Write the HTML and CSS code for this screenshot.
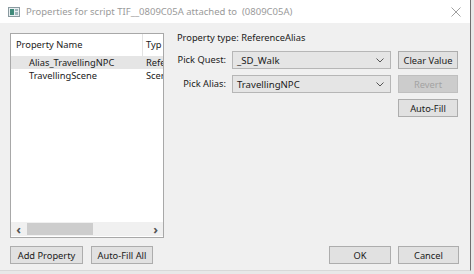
FILE: index.html
```html
<!DOCTYPE html>
<html>
<head>
<meta charset="utf-8">
<link rel="stylesheet" href="styles.css">
</head>
<body>
<div class="screen">
  <div class="window">
    <div class="titlebar">
      <svg class="app-icon" width="12" height="10" viewBox="0 0 12 10">
        <rect x="0.5" y="0.5" width="11" height="9" fill="#e8eef0" stroke="#8a9aa0"/>
        <rect x="2" y="2" width="4" height="6" fill="#3f8a7a"/>
        <rect x="7" y="2" width="3" height="2" fill="#9fb5bc"/>
        <rect x="7" y="5" width="3" height="3" fill="#9fb5bc"/>
      </svg>
      <span class="title">Properties for script TIF__0809C05A attached to&nbsp; (0809C05A)</span>
      <svg class="close" width="10" height="10" viewBox="0 0 10 10">
        <path d="M0.5 0.5 L9.5 9.5 M9.5 0.5 L0.5 9.5" stroke="#a0a0a0" stroke-width="1"/>
      </svg>
    </div>
    <div class="content">
      <div class="main">
        <div class="listbox">
          <div class="list-header">
            <div class="col col-name">Property Name</div>
            <div class="col col-type">Typ</div>
          </div>
          <div class="row selected">
            <div class="col col-name indent">Alias_TravellingNPC</div>
            <div class="col col-type">Refe</div>
          </div>
          <div class="row">
            <div class="col col-name indent">TravellingScene</div>
            <div class="col col-type">Scer</div>
          </div>
          <div class="list-fill"></div>
          <div class="hscroll">
            <span class="arrow">&lsaquo;</span>
            <div class="track"><div class="thumb"></div></div>
            <span class="arrow">&rsaquo;</span>
          </div>
        </div>
        <div class="panel">
          <div class="ptype">Property type: ReferenceAlias</div>
          <div class="form">
            <label class="lbl">Pick Quest:</label>
            <div class="combo"><span>_SD_Walk</span><svg width="8" height="5" viewBox="0 0 8 5"><path d="M0.5 0.5 L4 4 L7.5 0.5" fill="none" stroke="#555" stroke-width="1"/></svg></div>
            <button class="btn">Clear Value</button>
            <label class="lbl">Pick Alias:</label>
            <div class="combo"><span>TravellingNPC</span><svg width="8" height="5" viewBox="0 0 8 5"><path d="M0.5 0.5 L4 4 L7.5 0.5" fill="none" stroke="#555" stroke-width="1"/></svg></div>
            <button class="btn disabled">Revert</button>
            <div></div>
            <div></div>
            <button class="btn">Auto-Fill</button>
          </div>
        </div>
      </div>
      <div class="bottom">
        <div class="group">
          <button class="btn w-add">Add Property</button>
          <button class="btn w-all">Auto-Fill All</button>
        </div>
        <div class="group">
          <button class="btn w-ok">OK</button>
          <button class="btn w-cancel">Cancel</button>
        </div>
      </div>
    </div>
  </div>
</div>
</body>
</html>
```
FILE: styles.css
```css
* { box-sizing: border-box; }
html, body { margin: 0; padding: 0; }
body {
  width: 474px;
  height: 274px;
  overflow: hidden;
  background: #dcdcdc;
  font-family: "Noto Sans", "Open Sans", sans-serif;
  font-size: 9.3px;
  color: #1a1a1a;
}
.screen {
  width: 474px;
  height: 274px;
  background: #e8e8e8;
}
.window {
  width: 471px;
  height: 271px;
  border-right: 1px solid #6f6f6f;
  border-bottom: 1px solid #d8d8d8;
  background: #f0f0f0;
  display: flex;
  flex-direction: column;
}
.titlebar {
  height: 23px;
  background: #ffffff;
  display: flex;
  align-items: center;
  padding-left: 8px;
  flex: none;
}
.app-icon { flex: none; }
.title {
  margin-left: 6px;
  color: #9a9a9a;
  font-size: 9.5px;
  flex: 1;
  white-space: nowrap;
}
.close { margin-right: 9px; flex: none; }
.content {
  flex: 1;
  display: flex;
  flex-direction: column;
  padding: 10px 0 0 10px;
}
.main {
  display: flex;
  height: 205px;
}
.listbox {
  width: 154px;
  height: 205px;
  background: #fff;
  border: 1px solid #a8a8a8;
  display: flex;
  flex-direction: column;
  overflow: hidden;
}
.list-header, .row {
  display: flex;
  flex: none;
  white-space: nowrap;
}
.list-header { height: 22px; align-items: stretch; }
.row { height: 13px; align-items: center; }
.row.selected { background: #e5e5e5; }
.col { overflow: hidden; }
.col-name { width: 132px; padding-left: 5px; }
.col-name.indent { padding-left: 18px; }
.list-header .col { line-height: 22px; }
.list-header .col-name { border-right: 1px solid #e3e3e3; }
.col-type { padding-left: 3px; width: 20px; }
.list-fill { flex: 1; }
.hscroll {
  height: 14px;
  display: flex;
  align-items: center;
  background: #f0f0f0;
  flex: none;
  margin-bottom: 1px;
}
.arrow {
  width: 15px;
  text-align: center;
  font-size: 13px;
  font-weight: bold;
  color: #555;
  line-height: 14px;
}
.track { flex: 1; height: 12px; }
.thumb { width: 66px; height: 12px; background: #cdcdcd; margin-left: 1px; }
.panel {
  margin-left: 13px;
  display: flex;
  flex-direction: column;
}
.ptype { height: 19px; line-height: 12px; margin-top: -1px; }
.form {
  display: grid;
  grid-template-columns: 49px 159px 61px;
  grid-auto-rows: 18px;
  column-gap: 6px;
  row-gap: 6px;
}
.form .btn { margin-left: 1px; }
.lbl { text-align: right; line-height: 18px; white-space: nowrap; }
.combo {
  height: 18px;
  background: #e5e5e5;
  border: 1px solid #b6b6b6;
  display: flex;
  align-items: center;
  justify-content: space-between;
  padding: 0 6px 0 4px;
  font-size: 9.6px;
}
.btn {
  height: 18px;
  background: #e1e1e1;
  border: 1px solid #adadad;
  font-family: inherit;
  font-size: 9.3px;
  color: #1a1a1a;
  padding: 0;
  margin: 0;
}
.btn.disabled { background: #cccccc; border-color: #bfbfbf; color: #a3a3a3; }
.bottom {
  display: flex;
  justify-content: space-between;
  margin-top: 8px;
  width: 449px;
}
.group { display: flex; gap: 8px; }
.w-add { width: 73px; }
.w-all { width: 62px; }
.w-ok { width: 62px; margin-right: -1px; }
.w-cancel { width: 61px; }
```
